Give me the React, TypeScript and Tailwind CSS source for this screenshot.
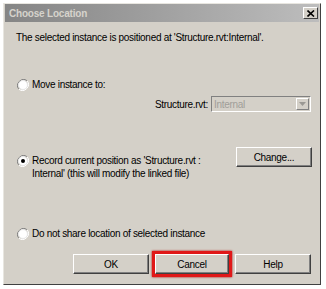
function Radio({ checked }: { checked?: boolean }) {
  return (
    <svg width="12" height="12" viewBox="0 0 12 12" className="shrink-0">
      <path d="M10.2 1.8 A6 6 0 0 0 1.8 10.2" stroke="#808080" strokeWidth="1" fill="none" />
      <path d="M1.8 10.2 A6 6 0 0 0 10.2 1.8" stroke="#ffffff" strokeWidth="1" fill="none" />
      <circle cx="6" cy="6" r="4.5" fill="#ffffff" stroke="#e8e8e8" strokeWidth="1" />
      {checked && <circle cx="6" cy="6" r="2" fill="#000000" />}
    </svg>
  )
}

function Btn({ children, className = "" }: { children: React.ReactNode; className?: string }) {
  return (
    <div
      className={`h-[20px] flex items-center justify-center bg-[#d4d0c8] border border-t-[#ffffff] border-l-[#ffffff] border-r-[#404040] border-b-[#404040] shadow-[inset_-1px_-1px_0_#808080] text-black ${className}`}
    >
      {children}
    </div>
  )
}

export default function App() {
  return (
    <div
      className="w-[326px] h-[289px] bg-white pl-[3px] pt-[3px] overflow-hidden"
      style={{ fontFamily: '"Liberation Sans", Arial, sans-serif' }}
    >
      <div className="w-[318px] h-[282px] bg-[#d4d0c8] border border-t-[#e8e6e0] border-l-[#e8e6e0] border-r-[#404040] border-b-[#404040] flex flex-col">
        {/* title bar */}
        <div className="h-[18px] ml-[1px] mr-[1px] bg-gradient-to-r from-[#858585] to-[#bdbdbd] flex items-center justify-between pl-[4px] pr-[1px]">
          <span className="text-[10px] font-bold text-[#d6d3cc] tracking-[-0.2px]">Choose Location</span>
          <div className="w-[15px] h-[12px] flex items-center justify-center bg-[#d4d0c8] border border-t-[#ffffff] border-l-[#ffffff] border-r-[#404040] border-b-[#404040]">
            <svg width="8" height="7" viewBox="0 0 8 7">
              <path d="M0.5 0.5 L7 6.5 M7 0.5 L0.5 6.5" stroke="#000" strokeWidth="1.6" />
            </svg>
          </div>
        </div>

        <div className="flex flex-col pl-[12px] pr-[9px] text-[10px] tracking-[-0.3px] text-black leading-[13px]">
          <p className="mt-[9px]">The selected instance is positioned at 'Structure.rvt:Internal'.</p>

          <div className="mt-[34px] flex items-center gap-[3px] pl-[1px]">
            <Radio />
            <span>Move instance to:</span>
          </div>

          <div className="mt-[5px] flex items-center justify-end gap-[3px]">
            <span>Structure.rvt:</span>
            <div className="w-[100px] h-[16px] flex items-center justify-between bg-[#d4d0c8] border border-t-[#808080] border-l-[#808080] border-r-[#ffffff] border-b-[#ffffff] pl-[2px] pr-[1px]">
              <span className="text-[#a09e99]">Internal</span>
              <div className="w-[13px] h-[12px] flex items-center justify-center bg-[#d4d0c8] border border-t-[#ffffff] border-l-[#ffffff] border-r-[#808080] border-b-[#808080]">
                <svg width="7" height="4" viewBox="0 0 7 4">
                  <path d="M0 0 H7 L3.5 4 Z" fill="#9a9893" />
                </svg>
              </div>
            </div>
          </div>

          <div className="mt-[42px] flex items-start justify-between">
            <div className="flex items-start gap-[3px] pl-[1px]">
              <div className="pt-[1px]">
                <Radio checked />
              </div>
              <span>
                Record current position as 'Structure.rvt :
                <br />
                Internal' (this will modify the linked file)
              </span>
            </div>
            <Btn className="w-[76px] mr-[-1px] mt-[-7px]">Change...</Btn>
          </div>

          <div className="mt-[47px] flex items-center gap-[3px] pl-[1px]">
            <Radio />
            <span>Do not share location of selected instance</span>
          </div>

          <div className="mt-[11px] flex items-center gap-[3px] pl-[57px]">
            <Btn className="w-[76px]">OK</Btn>
            <div className="border-[3px] border-[#e01818] shadow-[0_0_2px_#a00]">
              <Btn className="w-[74px]">Cancel</Btn>
            </div>
            <Btn className="w-[76px]">Help</Btn>
          </div>
        </div>
      </div>
    </div>
  )
}
